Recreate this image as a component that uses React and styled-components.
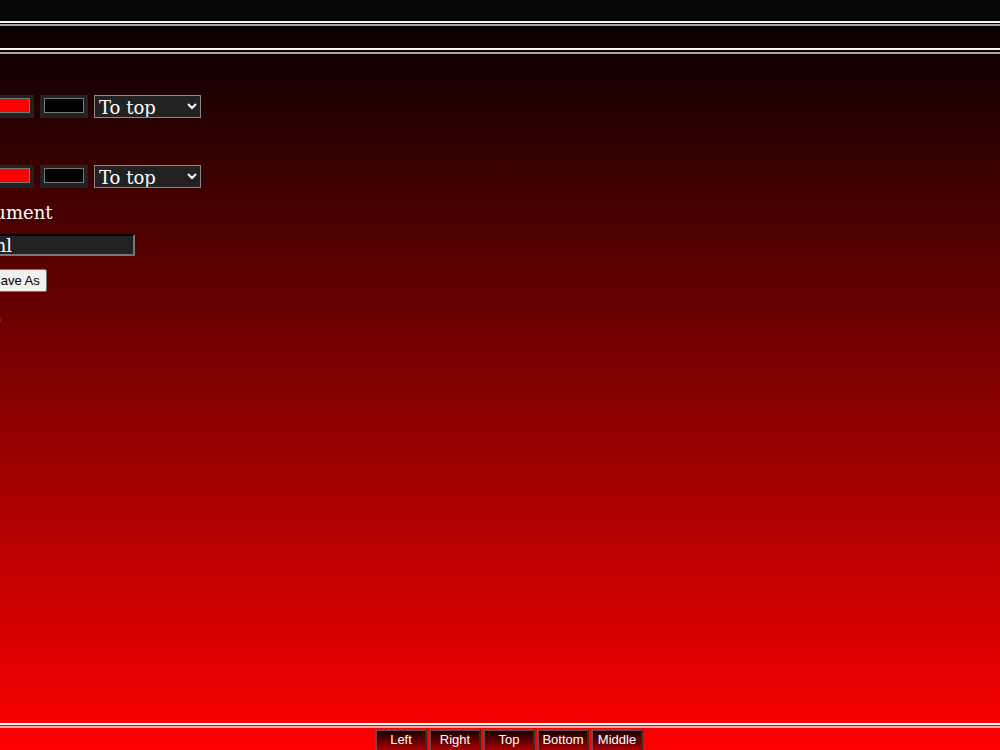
import React, {useState} from 'react'
import styled, {createGlobalStyle} from 'styled-components'

const GlobalStyle = createGlobalStyle`
    html, body {
        margin: 0;
        height: 100%;
        overflow: hidden;
    }
    body {
        background: linear-gradient(to bottom, #000 0%, #f00 100%);
        font-family: "DejaVu Serif", serif;
        color: #fff;
    }
    #root {
        height: 100%;
    }
`

const App = () => {
    const [doc, setDoc] = useState({
        name: 'a.html',
        fg: '#ff0000',
        bg: '#000000',
        fgDir: 'top',
        bgDir: 'top',
    })

    const handleDoc = e => {
        setDoc({
            ...doc,
            [e.target.name]: e.target.value
        })
    }

    return (
        <Page>
            <GlobalStyle />
            <TopBar />
            <DoubleRule />
            <Toolbar />
            <DoubleRule gap={2} />
            <Main>
                <Panel>
                    <Row indent={27} top={41}>
                        <ColorInput type="color" name="fg" value={doc.fg} onChange={handleDoc} />
                        <ColorInput type="color" name="bg" value={doc.bg} onChange={handleDoc} />
                        <Select name="fgDir" value={doc.fgDir} onChange={handleDoc}>
                            <option value="top">To top</option>
                            <option value="bottom">To bottom</option>
                            <option value="left">To left</option>
                            <option value="right">To right</option>
                        </Select>
                    </Row>
                    <Row indent={27} top={47}>
                        <ColorInput type="color" name="fg" value={doc.fg} onChange={handleDoc} />
                        <ColorInput type="color" name="bg" value={doc.bg} onChange={handleDoc} />
                        <Select name="bgDir" value={doc.bgDir} onChange={handleDoc}>
                            <option value="top">To top</option>
                            <option value="bottom">To bottom</option>
                            <option value="left">To left</option>
                            <option value="right">To right</option>
                        </Select>
                    </Row>
                    <Label>Document</Label>
                    <Row top={10}>
                        <NameInput type="text" name="name" value={doc.name} onChange={handleDoc} />
                    </Row>
                    <Row indent={26} top={13}>
                        <SaveButton>Save As</SaveButton>
                    </Row>
                    <Label>Tags</Label>
                </Panel>
            </Main>
            <DoubleRule />
            <Footer>
                <TabButton>Left</TabButton>
                <TabButton>Right</TabButton>
                <TabButton>Top</TabButton>
                <TabButton>Bottom</TabButton>
                <TabButton>Middle</TabButton>
            </Footer>
        </Page>
    )
}

const Page = styled.div`
    display: flex;
    flex-direction: column;
    height: 100%;
`

const TopBar = styled.div`
    height: 21px;
    background-color: #070707;
`

const DoubleRule = styled.div`
    height: ${props => props.gap || 1}px;
    border-top: 2px solid rgba(255, 255, 255, 0.96);
    border-bottom: 2px solid rgba(255, 255, 255, 0.64);
`

const Toolbar = styled.div`
    height: 22px;
`

const Main = styled.div`
    flex: 1;
    overflow: hidden;
`

const Panel = styled.div`
    display: flex;
    flex-direction: column;
    align-items: flex-start;
    margin-left: -41px;
`

const Row = styled.div`
    display: flex;
    align-items: center;
    gap: 6px;
    padding-left: ${props => props.indent || 0}px;
    margin-top: ${props => props.top || 0}px;
`

const ColorInput = styled.input`
    appearance: none;
    width: 48px;
    height: 23px;
    margin: 0;
    padding: 3px 4px 5px;
    border: none;
    background-color: #222;
    cursor: pointer;
    &::-webkit-color-swatch-wrapper {
        padding: 0;
    }
    &::-webkit-color-swatch {
        border: 1px solid #777;
    }
`

const Select = styled.select`
    width: 107px;
    height: 23px;
    margin: 0;
    padding: 0;
    font-family: "DejaVu Serif", serif;
    font-size: 18px;
    color: #fff;
    background-color: #222;
    border: 1px solid #888;
    border-radius: 0;
`

const Label = styled.div`
    margin-top: 14px;
    font-size: 18px;
    line-height: 22px;
`

const NameInput = styled.input`
    width: 176px;
    height: 22px;
    box-sizing: border-box;
    margin: 0;
    padding: 0 2px;
    text-indent: -9px;
    font-family: "DejaVu Serif", serif;
    font-size: 18px;
    color: #fff;
    background-color: #222;
    border: 2px inset #767676;
    border-top-color: #444;
    border-left-color: #444;
`

const SaveButton = styled.button`
    height: 23px;
    margin: 0;
    padding: 1px 6px;
    font-family: "Liberation Sans", Arial, sans-serif;
    font-size: 13px;
    color: #000;
    background-color: #efefef;
    border: 1px solid #767676;
    border-radius: 2px;
`

const Footer = styled.div`
    display: flex;
    justify-content: center;
    gap: 2px;
    padding: 1px 0 0 18px;
    height: 21px;
`

const TabButton = styled.button`
    width: 52px;
    height: 24px;
    margin: 0;
    padding: 0 0 3px;
    font-family: "Liberation Sans", Arial, sans-serif;
    font-size: 13px;
    color: #fff;
    background: linear-gradient(to bottom, #1a0000 0%, #b00000 100%);
    border: 2px solid #555;
    border-color: #6a4a4a #3a2a2a #3a2a2a #6a4a4a;
    cursor: pointer;
`

export default App
